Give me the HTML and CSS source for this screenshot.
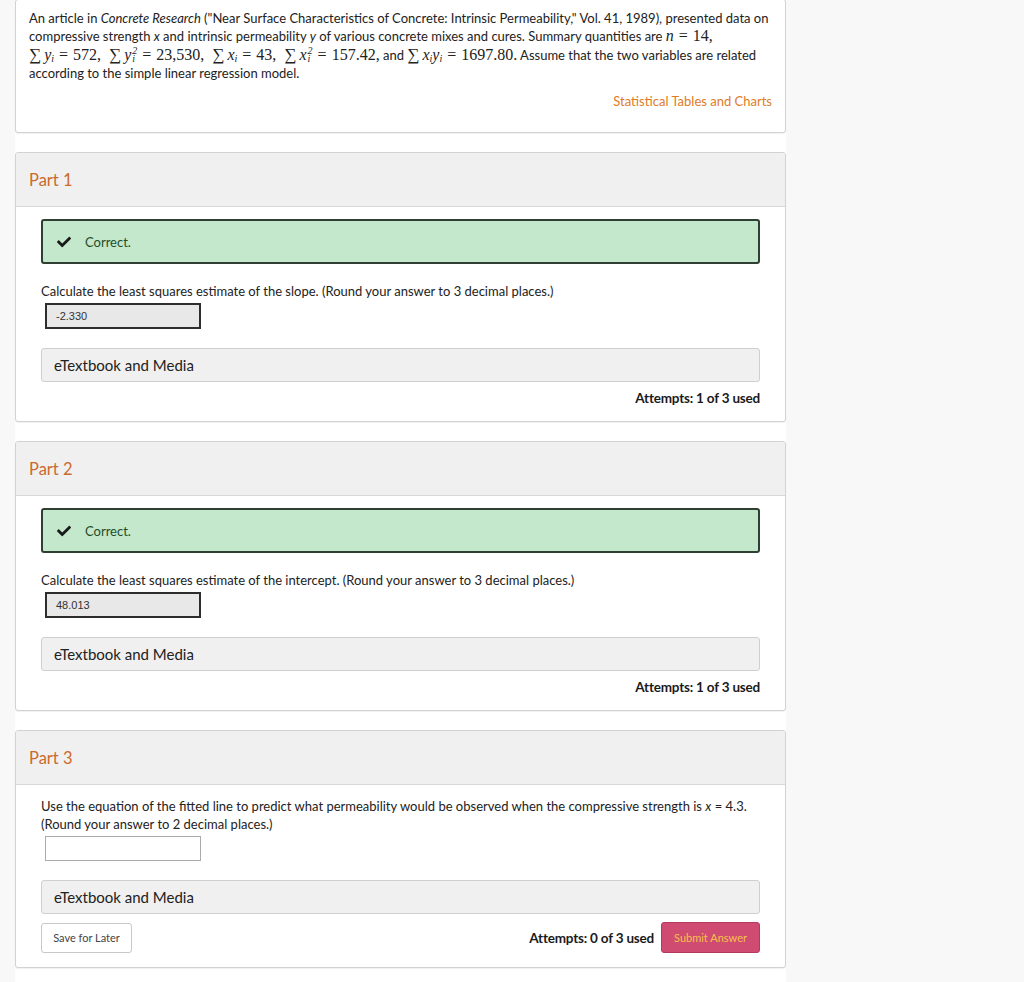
FILE: index.html
```html
<!DOCTYPE html>
<html>
<head>
<meta charset="utf-8">
<link rel="stylesheet" href="styles.css">
</head>
<body>
<div class="main">
  <div class="card intro">
    <p class="question">An article in <i>Concrete Research</i> ("Near Surface Characteristics of Concrete: Intrinsic Permeability," Vol. 41, 1989), presented data on compressive strength <i>x</i> and intrinsic permeability <i>y</i> of various concrete mixes and cures. Summary quantities are <span class="m"><i>n</i><span class="eq">=</span>14,</span><br><span class="m"><span class="sum">∑</span><i>y<sub>i</sub></i><span class="eq">=</span>572,<span class="sp"></span><span class="sum">∑</span><i>y<span class="ss"><span>2</span><span>i</span></span></i><span class="eq">=</span>23,530,<span class="sp"></span><span class="sum">∑</span><i>x<sub>i</sub></i><span class="eq">=</span>43,<span class="sp"></span><span class="sum">∑</span><i>x<span class="ss"><span>2</span><span>i</span></span></i><span class="eq">=</span>157.42,</span> and <span class="m"><span class="sum">∑</span><i>x<sub>i</sub>y<sub>i</sub></i><span class="eq">=</span>1697.80.</span> Assume that the two variables are related according to the simple linear regression model.</p>
    <div class="links"><span class="link">Statistical Tables and Charts</span></div>
  </div>

  <div class="card part">
    <div class="part-head">Part 1</div>
    <div class="part-body">
      <div class="correct"><svg class="check" viewBox="0 0 512 512"><path d="M173.9 439.4l-166.4-166.4c-10-10-10-26.2 0-36.2l36.2-36.2c10-10 26.2-10 36.2 0L192 312.7 432.1 72.6c10-10 26.2-10 36.2 0l36.2 36.2c10 10 10 26.2 0 36.2l-294.4 294.4c-10 10-26.2 10-36.2 0z"/></svg><span>Correct.</span></div>
      <p class="prompt">Calculate the least squares estimate of the slope. (Round your answer to 3 decimal places.)</p>
      <div class="answer filled">-2.330</div>
      <div class="media">eTextbook and Media</div>
      <div class="foot"><span class="attempts">Attempts: 1 of 3 used</span></div>
    </div>
  </div>

  <div class="card part">
    <div class="part-head">Part 2</div>
    <div class="part-body">
      <div class="correct"><svg class="check" viewBox="0 0 512 512"><path d="M173.9 439.4l-166.4-166.4c-10-10-10-26.2 0-36.2l36.2-36.2c10-10 26.2-10 36.2 0L192 312.7 432.1 72.6c10-10 26.2-10 36.2 0l36.2 36.2c10 10 10 26.2 0 36.2l-294.4 294.4c-10 10-26.2 10-36.2 0z"/></svg><span>Correct.</span></div>
      <p class="prompt">Calculate the least squares estimate of the intercept. (Round your answer to 3 decimal places.)</p>
      <div class="answer filled">48.013</div>
      <div class="media">eTextbook and Media</div>
      <div class="foot"><span class="attempts">Attempts: 1 of 3 used</span></div>
    </div>
  </div>

  <div class="card part">
    <div class="part-head">Part 3</div>
    <div class="part-body">
      <p class="prompt first">Use the equation of the fitted line to predict what permeability would be observed when the compressive strength is <i>x</i> = 4.3.<br>(Round your answer to 2 decimal places.)</p>
      <div class="answer empty"></div>
      <div class="media">eTextbook and Media</div>
      <div class="foot buttons">
        <span class="save">Save for Later</span>
        <span class="spacer"></span>
        <span class="attempts">Attempts: 0 of 3 used</span>
        <span class="submit">Submit Answer</span>
      </div>
    </div>
  </div>
</div>
</body>
</html>
```

FILE: styles.css
```css
* { box-sizing: border-box; }
html, body { margin: 0; padding: 0; }
body {
  background: #f8f8f8;
  font-family: Lato, "Open Sans", sans-serif;
  color: #222;
  font-size: 13px;
}
.main {
  margin-left: 15px;
  width: 771px;
  min-height: 982px;
  background: #fff;
  display: flex;
  flex-direction: column;
  gap: 19px;
  padding-bottom: 16px;
}
.card {
  border: 1px solid #d2d2d2;
  border-radius: 3px;
  background: #fff;
  box-shadow: 0 1px 1px rgba(0,0,0,0.06);
}
.intro {
  margin-top: -1px;
  padding: 9px 13px 22px 13px;
}
.question {
  margin: 0;
  line-height: 18.3px;
  font-size: 13px;
}
.m {
  font-family: "Liberation Serif", "Times New Roman", serif;
  font-size: 16px;
  line-height: 1;
}
.m i { font-style: italic; }
.m sub { font-size: 10px; line-height: 0; vertical-align: -2px; font-style: italic; }
.eq { display: inline-block; margin: 0 5px; font-style: normal; }
.sp { display: inline-block; width: 8px; }
.ss {
  display: inline-flex;
  flex-direction: column;
  vertical-align: 6px;
  line-height: 8px;
  font-size: 10px;
  margin-left: 1px;
}
.sum { font-style: normal; font-size: 17px; margin-right: 3px; }
.links {
  margin-top: 10px;
  display: flex;
  justify-content: flex-end;
  line-height: 18px;
}
.link { color: #e07b24; font-size: 13px; }

.part-head {
  background: #f0f0f0;
  border-bottom: 1px solid #d8d8d8;
  height: 54px;
  padding-left: 13px;
  display: flex;
  align-items: center;
  font-size: 16.5px;
  color: #cc6a2c;
  border-radius: 3px 3px 0 0;
}
.part-body {
  padding: 12px 25px 14px 25px;
  display: flex;
  flex-direction: column;
}
.correct {
  height: 45px;
  background: #c4e8cc;
  border: 2px solid #2f3f32;
  border-radius: 3px;
  display: flex;
  align-items: center;
  padding-left: 14px;
  color: #1f4d2a;
  font-size: 13px;
}
.check { width: 14px; height: 14px; fill: #1a1a1a; margin-right: 14px; }
.prompt {
  margin: 18px 0 0 0;
  line-height: 18px;
  font-size: 13px;
}
.prompt.first { margin-top: 0; }
.answer {
  margin: 3px 0 0 4px;
  width: 156px;
  height: 26px;
  display: flex;
  align-items: center;
  padding-left: 9px;
  font-family: "Liberation Sans", Arial, sans-serif;
  font-size: 11px;
  color: #333;
}
.answer.filled { background: #e8e8e8; border: 2px solid #2d2d2d; }
.answer.empty { background: #fff; border: 1px solid #aaa; height: 25px; margin-top: 3px; }
.media {
  margin-top: 19px;
  height: 34px;
  background: #f0f0f0;
  border: 1px solid #cfcfcf;
  border-radius: 3px;
  display: flex;
  align-items: center;
  padding-left: 12px;
  font-size: 15px;
  color: #222;
}
.foot {
  margin-top: 7px;
  display: flex;
  justify-content: flex-end;
  line-height: 18px;
}
.attempts { font-weight: bold; font-size: 13.5px; color: #1a1a1a; letter-spacing: -0.2px; }
.buttons { margin-top: 8px; align-items: center; }
.save {
  height: 30px;
  width: 91px;
  border: 1px solid #c8c8c8;
  border-radius: 3px;
  display: flex;
  align-items: center;
  justify-content: center;
  font-size: 11px;
  color: #444;
  background: #fff;
}
.spacer { flex: 1; }
.submit {
  margin-left: 7px;
  height: 31px;
  width: 99px;
  background: #cf4b72;
  border: 1px solid #b33c5e;
  border-radius: 3px;
  display: flex;
  align-items: center;
  justify-content: center;
  color: #f7c04a;
  font-size: 11px;
}
```
